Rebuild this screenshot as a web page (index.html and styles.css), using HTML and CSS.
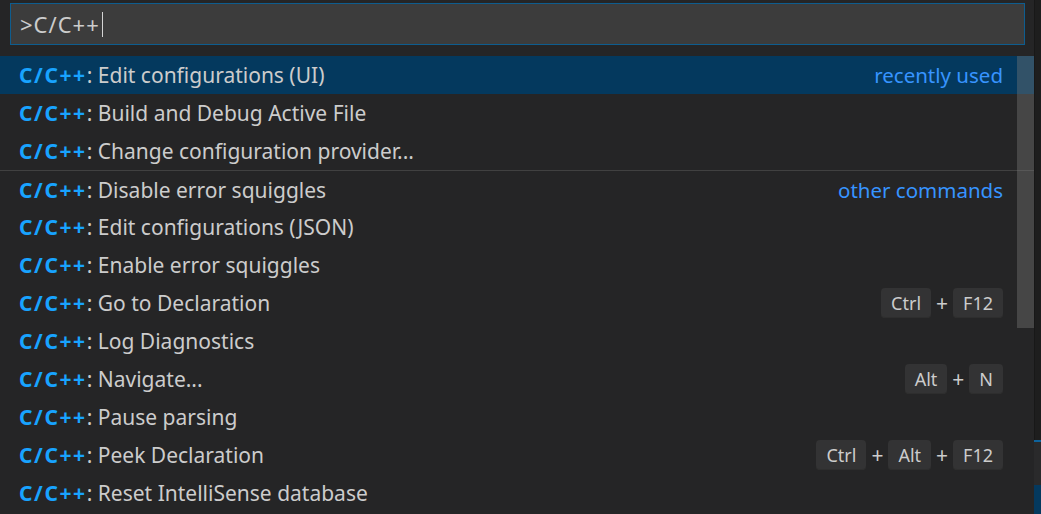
FILE: index.html
```html
<!DOCTYPE html>
<html>
<head>
<meta charset="utf-8">
<link rel="stylesheet" href="styles.css">
</head>
<body>
<div class="screen">
  <div class="widget">
    <div class="input-wrap">
      <div class="input"><span class="input-text">&gt;C/C++</span><span class="caret"></span></div>
    </div>
    <div class="list">
      <div class="row selected"><span class="label"><b>C/C++</b>: Edit configurations (UI)</span><span class="desc">recently used</span></div>
      <div class="row"><span class="label"><b>C/C++</b>: Build and Debug Active File</span></div>
      <div class="row"><span class="label"><b>C/C++</b>: Change configuration provider...</span></div>
      <div class="row sep"><span class="label"><b>C/C++</b>: Disable error squiggles</span><span class="desc">other commands</span></div>
      <div class="row"><span class="label"><b>C/C++</b>: Edit configurations (JSON)</span></div>
      <div class="row"><span class="label"><b>C/C++</b>: Enable error squiggles</span></div>
      <div class="row"><span class="label"><b>C/C++</b>: Go to Declaration</span><span class="keys"><kbd>Ctrl</kbd><i>+</i><kbd>F12</kbd></span></div>
      <div class="row"><span class="label"><b>C/C++</b>: Log Diagnostics</span></div>
      <div class="row"><span class="label"><b>C/C++</b>: Navigate...</span><span class="keys"><kbd>Alt</kbd><i>+</i><kbd>N</kbd></span></div>
      <div class="row"><span class="label"><b>C/C++</b>: Pause parsing</span></div>
      <div class="row"><span class="label"><b>C/C++</b>: Peek Declaration</span><span class="keys"><kbd>Ctrl</kbd><i>+</i><kbd>Alt</kbd><i>+</i><kbd>F12</kbd></span></div>
      <div class="row"><span class="label"><b>C/C++</b>: Reset IntelliSense database</span></div>
      <div class="scrollbar"></div>
    </div>
  </div>
  <div class="side">
    <div class="side-a"></div>
    <div class="side-b"></div>
    <div class="side-c"></div>
    <div class="side-d"></div>
  </div>
</div>
</body>
</html>
```
FILE: styles.css
```css
html, body {
  margin: 0;
  padding: 0;
  background: #1e1e1e;
  overflow: hidden;
}
.screen {
  display: flex;
  width: 1041px;
  height: 514px;
  font-family: "Noto Sans", "Open Sans", sans-serif;
  font-size: 21px;
  color: #cccccc;
}
.widget {
  width: 1034px;
  height: 514px;
  background: #252526;
  display: flex;
  flex-direction: column;
  overflow: hidden;
}
.input-wrap {
  padding: 3px 9px 0 10px;
  height: 56px;
  flex: none;
  box-sizing: border-box;
}
.input {
  height: 42px;
  box-sizing: border-box;
  border: 1px solid #0e5d8f;
  background: #3c3c3c;
  display: flex;
  align-items: center;
  padding-left: 9px;
}
.input-text {
  color: #cccccc;
  font-size: 22px;
  letter-spacing: 1px;
}
.caret {
  width: 1px;
  height: 25px;
  background: #d4d4d4;
  margin-left: 2px;
}
.list {
  position: relative;
  flex: 1;
}
.row {
  height: 38px;
  box-sizing: border-box;
  display: flex;
  align-items: center;
  justify-content: space-between;
  padding: 0 31px 0 19px;
  white-space: nowrap;
}
.row.selected {
  background: #04395e;
}
.row.sep {
  border-top: 1px solid #414141;
}
.label b {
  color: #18a3ff;
  font-weight: 700;
  letter-spacing: 1.6px;
}
.desc {
  color: #3794ff;
  font-size: 20.5px;
}
.keys {
  display: flex;
  align-items: center;
  font-size: 18px;
}
.keys kbd {
  font-family: inherit;
  height: 30px;
  min-width: 22px;
  box-sizing: border-box;
  padding: 0 10px;
  display: flex;
  align-items: center;
  justify-content: center;
  background: #333334;
  border-radius: 4px;
  color: #cccccc;
  box-shadow: inset 0 -1px 0 #2e2e2e;
}
.keys i {
  font-style: normal;
  font-size: 21px;
  margin: 0 5px;
  color: #cccccc;
}
.scrollbar {
  position: absolute;
  top: 0;
  right: 0;
  width: 17px;
  height: 272px;
  background: rgba(121, 121, 121, 0.4);
}
.side {
  width: 7px;
  display: flex;
  flex-direction: column;
}
.side-a {
  height: 440px;
  background: #1e1e1e;
  border-left: 1px solid #181818;
}
.side-b {
  height: 2px;
  background: #0e639c;
}
.side-c {
  height: 43px;
  background: #2a2a2b;
}
.side-d {
  flex: 1;
  background: #04395e;
}
```
